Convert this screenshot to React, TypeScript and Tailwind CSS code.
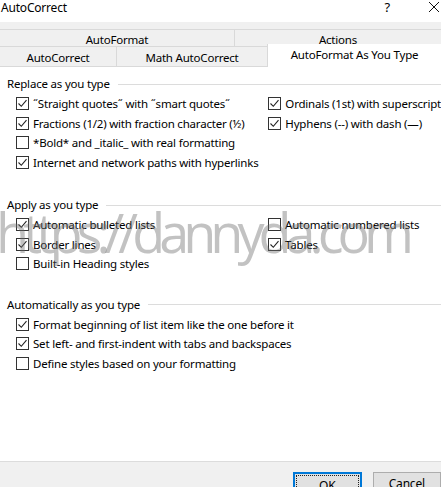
import React from "react";

const font = { fontFamily: '"Segoe UI", "Noto Sans", "Open Sans", sans-serif' };

function Box({ checked }: { checked: boolean }) {
  return (
    <span className="flex h-[13px] w-[13px] shrink-0 items-center justify-center border border-[#333] bg-white">
      {checked && (
        <svg width="11" height="11" viewBox="0 0 11 11">
          <path d="M1.5 5.5 L4.3 8.3 L9.5 2.2" fill="none" stroke="#222" strokeWidth="1.1" />
        </svg>
      )}
    </span>
  );
}

function Check({ label, checked }: { label: string; checked: boolean }) {
  return (
    <div className="flex h-[19.5px] items-center gap-[4px] whitespace-nowrap">
      <Box checked={checked} />
      <span>{label}</span>
    </div>
  );
}

function Heading({ title }: { title: string }) {
  return (
    <div className="flex h-4 items-center gap-2">
      <span className="whitespace-nowrap">{title}</span>
      <div className="h-px flex-1 bg-[#dcdcdc]" />
    </div>
  );
}

export default function App() {
  return (
    <div
      className="relative h-[487px] w-[441px] overflow-hidden bg-white text-[11.5px] tracking-[-0.2px] text-[#000]"
      style={font}
    >
      {/* title bar */}
      <div className="flex h-[22px] items-start bg-white pl-[1px] leading-[15px]">
        <span className="flex-1 text-[12px]">AutoCorrect</span>
        <span className="mr-[38px] text-[13px]">?</span>
        <svg width="12" height="12" viewBox="0 0 12 12" className="mr-[1px] mt-[1px]">
          <path d="M1 1 L11 11 M11 1 L1 11" stroke="#111" strokeWidth="1" />
        </svg>
      </div>

      {/* tabs */}
      <div className="bg-[#f0f0f0] pt-[7px]">
        <div className="flex h-[17px] border-t border-[#d9d9d9] leading-[19px]">
          <div className="w-[235px] border-r border-[#d9d9d9] text-center">AutoFormat</div>
          <div className="flex-1 text-center">Actions</div>
        </div>
        <div className="flex h-[21px] leading-[22px]">
          <div className="w-[117px] border-t border-b border-r border-[#d9d9d9] text-center">AutoCorrect</div>
          <div className="w-[150px] border-t border-b border-[#d9d9d9] text-center">Math AutoCorrect</div>
          <div className="-mt-[2px] flex-1 border-l border-[#d9d9d9] bg-white text-center">AutoFormat As You Type</div>
        </div>
      </div>

      {/* content */}
      <div className="h-[394px] bg-white pl-[7px] pt-[9px]">
        <Heading title="Replace as you type" />
        <div className="mt-[2px] flex pl-[9px]">
          <div className="w-[253px]">
            <Check checked label={"\u02DDStraight quotes\u02DD with \u02DDsmart quotes\u02DD"} />
            <Check checked label={"Fractions (1/2) with fraction character (\u00BD)"} />
            <Check checked={false} label="*Bold* and _italic_ with real formatting" />
            <Check checked label="Internet and network paths with hyperlinks" />
          </div>
          <div>
            <Check checked label="Ordinals (1st) with superscript" />
            <Check checked label={"Hyphens (--) with dash (\u2014)"} />
          </div>
        </div>

        <div className="mt-[25px]">
          <Heading title="Apply as you type" />
        </div>
        <div className="mt-[2px] flex pl-[9px]">
          <div className="w-[252px]">
            <Check checked label="Automatic bulleted lists" />
            <Check checked label="Border lines" />
            <Check checked={false} label="Built-in Heading styles" />
          </div>
          <div>
            <Check checked={false} label="Automatic numbered lists" />
            <Check checked label="Tables" />
          </div>
        </div>

        <div className="mt-[23px]">
          <Heading title="Automatically as you type" />
        </div>
        <div className="mt-[2px] pl-[9px]">
          <Check checked label="Format beginning of list item like the one before it" />
          <Check checked label="Set left- and first-indent with tabs and backspaces" />
          <Check checked={false} label="Define styles based on your formatting" />
        </div>
      </div>

      {/* footer */}
      <div className="flex h-[30px] gap-[11px] border-t border-[#dcdcdc] bg-[#f0f0f0] pl-[293px] pt-[10px] text-[12px]">
        <div className="h-[26px] w-[73px] border-2 border-[#0078d7] bg-[#e1e1e1] p-[1px]">
          <div className="h-full border border-dotted border-[#222] text-center leading-[20px]">OK</div>
        </div>
        <div className="h-[26px] w-[73px] border border-[#adadad] bg-[#e1e1e1] text-center leading-[22px]">Cancel</div>
      </div>

      {/* watermark */}
      <div
        className="pointer-events-none absolute left-[-4px] top-[197px] whitespace-nowrap text-[54px] font-medium leading-[70px] tracking-[-6px] text-[rgba(110,110,110,0.42)]"
        style={{ fontFamily: '"Open Sans", sans-serif' }}
      >
        https://dannyda.com
      </div>
    </div>
  );
}
